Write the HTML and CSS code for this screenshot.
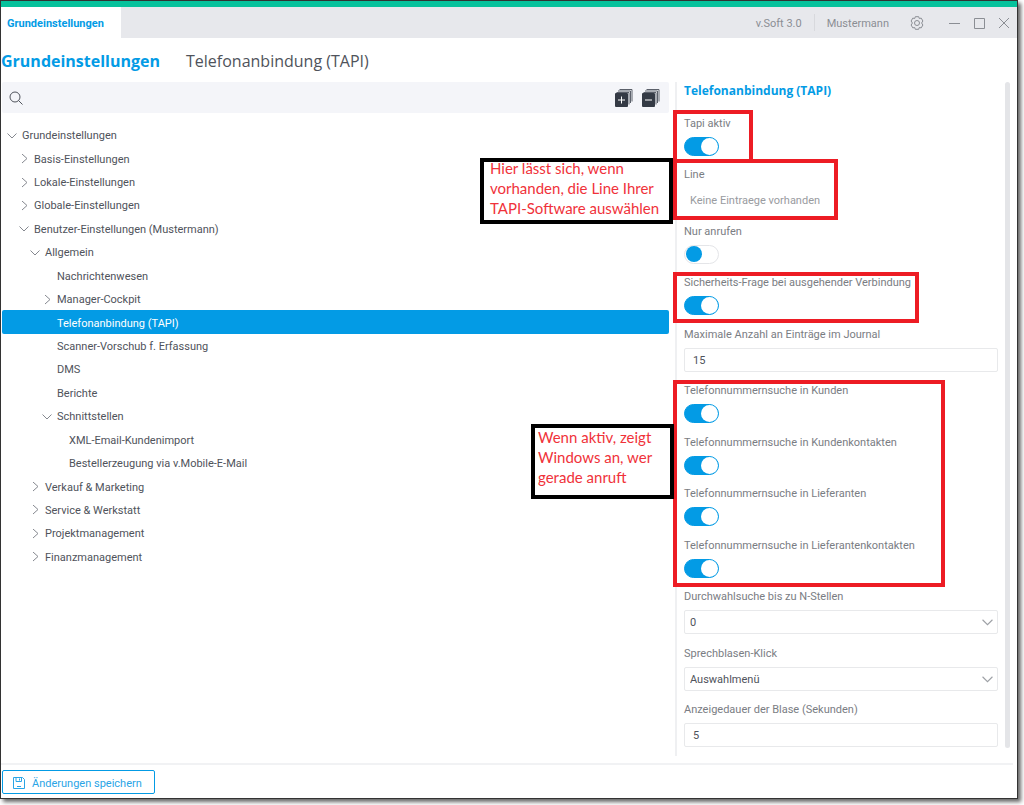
FILE: index.html
```
<!DOCTYPE html>
<html lang="de">
<head>
    <meta charset="UTF-8">
    <meta name="viewport" content="width=device-width, initial-scale=1.0">
    <title>Grundeinstellungen</title>
    <link rel="stylesheet" href="styles.css">
</head>
<body>
    <!-- shared icons -->
    <svg class="sprite" aria-hidden="true">
        <symbol id="down" viewBox="0 0 10 10"><path d="M.5 2.500 5 7l4.500-4.500"/></symbol>
        <symbol id="right" viewBox="0 0 10 10"><path d="M3 0l5 4.500L3 9"/></symbol>
    </svg>

    <div class="window">
        <header class="titlebar">
            <button class="tab">Grundeinstellungen</button>
            <div class="titlebar-right">
                <span class="version">v.Soft 3.0</span>
                <span class="user">Mustermann</span>
                <button class="icon-btn gear" aria-label="Einstellungen">
                    <svg width="14" height="14" viewBox="0 0 14 14"><path d="M5.300.700h3.400l.6 1.800 1.900-.4 1.700 2.900L11.600 7l1.300 2-1.700 2.900-1.900-.4-.6 1.800H5.300l-.6-1.800-1.900.4L1.100 9l1.300-2-1.300-2 1.700-2.900 1.900.4z"/><circle cx="7" cy="7" r="2.500"/></svg>
                </button>
                <button class="icon-btn" aria-label="Minimieren"><svg width="12" height="12" viewBox="0 0 12 12"><path d="M1 6.500h11"/></svg></button>
                <button class="icon-btn" aria-label="Maximieren"><svg width="12" height="12" viewBox="0 0 12 12"><path d="M1.500 1.500h10v10h-10z"/></svg></button>
                <button class="icon-btn" aria-label="Schließen"><svg width="12" height="12" viewBox="0 0 12 12"><path d="M1 1l10 10M11 1 1 11"/></svg></button>
            </div>
        </header>

        <div class="heading">
            <h1>Grundeinstellungen</h1>
            <span class="subtitle">Telefonanbindung (TAPI)</span>
        </div>

        <main class="content">
            <section class="left">
                <div class="search">
                    <label for="search"><svg width="14" height="14" viewBox="0 0 14 14"><circle cx="6" cy="6" r="5"/><path d="m9.500 9.500 4 4"/></svg></label>
                    <input type="text" id="search" aria-label="Suche">
                    <button class="stack-btn" aria-label="Alle aufklappen">
                        <svg width="18" height="18" viewBox="0 0 18 18"><path class="sheets" d="M1.500 3.500h12.500v12M3 2h12.500v12M4.500.500H17v12"/><rect y="4" width="13" height="14" rx="1"/><path class="sign" d="M3 11h7M6.500 7.500v7"/></svg>
                    </button>
                    <button class="stack-btn" aria-label="Alle zuklappen">
                        <svg width="18" height="18" viewBox="0 0 18 18"><path class="sheets" d="M1.500 3.500h12.500v12M3 2h12.500v12M4.500.500H17v12"/><rect y="4" width="13" height="14" rx="1"/><path class="sign" d="M3 11h7"/></svg>
                    </button>
                </div>

                <ul class="tree">
                    <li class="l0"><svg><use href="#down"/></svg>Grundeinstellungen</li>
                    <li class="l1"><svg><use href="#right"/></svg>Basis-Einstellungen</li>
                    <li class="l1"><svg><use href="#right"/></svg>Lokale-Einstellungen</li>
                    <li class="l1"><svg><use href="#right"/></svg>Globale-Einstellungen</li>
                    <li class="l1"><svg><use href="#down"/></svg>Benutzer-Einstellungen (Mustermann)</li>
                    <li class="l2"><svg><use href="#down"/></svg>Allgemein</li>
                    <li class="l3"><svg></svg>Nachrichtenwesen</li>
                    <li class="l3"><svg><use href="#right"/></svg>Manager-Cockpit</li>
                    <li class="l3 selected"><svg></svg>Telefonanbindung (TAPI)</li>
                    <li class="l3"><svg></svg>Scanner-Vorschub f. Erfassung</li>
                    <li class="l3"><svg></svg>DMS</li>
                    <li class="l3"><svg></svg>Berichte</li>
                    <li class="l3"><svg><use href="#down"/></svg>Schnittstellen</li>
                    <li class="l4"><svg></svg>XML-Email-Kundenimport</li>
                    <li class="l4"><svg></svg>Bestellerzeugung via v.Mobile-E-Mail</li>
                    <li class="l2"><svg><use href="#right"/></svg>Verkauf &amp; Marketing</li>
                    <li class="l2"><svg><use href="#right"/></svg>Service &amp; Werkstatt</li>
                    <li class="l2"><svg><use href="#right"/></svg>Projektmanagement</li>
                    <li class="l2"><svg><use href="#right"/></svg>Finanzmanagement</li>
                </ul>
            </section>

            <section class="right">
                <h2>Telefonanbindung (TAPI)</h2>
                <form class="form">
                    <div class="field">
                        <label for="tapi">Tapi aktiv</label>
                        <input type="checkbox" class="switch" id="tapi" checked>
                    </div>
                    <div class="field">
                        <label for="line">Line</label>
                        <select id="line" class="empty" disabled><option>Keine Eintraege vorhanden</option></select>
                    </div>
                    <div class="field">
                        <label for="callonly">Nur anrufen</label>
                        <input type="checkbox" class="switch" id="callonly">
                    </div>
                    <div class="field">
                        <label for="confirm">Sicherheits-Frage bei ausgehender Verbindung</label>
                        <input type="checkbox" class="switch" id="confirm" checked>
                    </div>
                    <div class="field">
                        <label for="journal">Maximale Anzahl an Einträge im Journal</label>
                        <input type="text" id="journal" value="15">
                    </div>
                    <div class="field">
                        <label for="kunden">Telefonnummernsuche in Kunden</label>
                        <input type="checkbox" class="switch" id="kunden" checked>
                    </div>
                    <div class="field">
                        <label for="kundenkontakte">Telefonnummernsuche in Kundenkontakten</label>
                        <input type="checkbox" class="switch" id="kundenkontakte" checked>
                    </div>
                    <div class="field">
                        <label for="lieferanten">Telefonnummernsuche in Lieferanten</label>
                        <input type="checkbox" class="switch" id="lieferanten" checked>
                    </div>
                    <div class="field">
                        <label for="lieferantenkontakte">Telefonnummernsuche in Lieferantenkontakten</label>
                        <input type="checkbox" class="switch" id="lieferantenkontakte" checked>
                    </div>
                    <div class="field">
                        <label for="stellen">Durchwahlsuche bis zu N-Stellen</label>
                        <div class="select">
                            <select id="stellen"><option>0</option></select>
                            <svg><use href="#down"/></svg>
                        </div>
                    </div>
                    <div class="field">
                        <label for="klick">Sprechblasen-Klick</label>
                        <div class="select">
                            <select id="klick"><option>Auswahlmenü</option></select>
                            <svg><use href="#down"/></svg>
                        </div>
                    </div>
                    <div class="field">
                        <label for="dauer">Anzeigedauer der Blase (Sekunden)</label>
                        <input type="text" id="dauer" value="5">
                    </div>
                </form>
                <div class="scrollbar"></div>

                <div class="mark mark-tapi"></div>
                <div class="mark mark-line"></div>
                <div class="mark mark-confirm"></div>
                <div class="mark mark-search"></div>
                <p class="note note-line">Hier lässt sich, wenn vorhanden, die Line Ihrer TAPI-Software auswählen</p>
                <p class="note note-search">Wenn aktiv, zeigt Windows an, wer gerade anruft</p>
            </section>
        </main>

        <footer class="footer">
            <button class="save">
                <svg width="12" height="12" viewBox="0 0 12 12"><path d="M.5.500h9l2 2v9H.500zM3 .500v4h5.500v-4M6.500 1.500v2M4 9.500h4"/></svg>
                Änderungen speichern
            </button>
        </footer>
    </div>
</body>
</html>
```

FILE: styles.css
```
* {
    box-sizing: border-box;
}

body {
    margin: 0;
    padding: 0 6px 6px 0;
    height: 100vh;
    background-color: #fff;
    font-family: Roboto, "Noto Sans", sans-serif;
    font-size: 11px;
    color: #4f535b;
}

button, input, select {
    font: inherit;
    color: inherit;
}

button {
    background: none;
    border: none;
    padding: 0;
}

svg {
    fill: none;
    stroke: currentColor;
    flex: none;
}

.sprite {
    display: none;
}

.window {
    display: flex;
    flex-direction: column;
    height: 100%;
    border: 1px solid #333;
    background-color: #fff;
    box-shadow: 3px 3px 4px rgba(0, 0, 0, 0.6);
}

/* title bar */
.titlebar {
    display: flex;
    justify-content: space-between;
    height: 37px;
    border-top: 6px solid #06c29c;
    background-color: #e7e8ec;
    flex: none;
}

.tab {
    width: 120px;
    padding: 2px 0 0 6px;
    text-align: left;
    background-color: #fff;
    color: #039be5;
    font-weight: bold;
}

.titlebar-right {
    display: flex;
    align-items: center;
    padding-right: 7px;
    color: #8b8e94;
}

.version {
    padding: 2px 12px 0 0;
}

.user {
    padding: 3px 21px 1px 12px;
    border-left: 1px solid #d8d9dd;
}

.icon-btn {
    display: flex;
    margin-left: 13px;
}

.gear {
    margin: 0 11px 0 0;
}

/* heading */
.heading {
    display: flex;
    align-items: center;
    gap: 26px;
    height: 44px;
    padding-top: 2px;
    flex: none;
    font-family: "Open Sans", "Noto Sans", sans-serif;
    font-size: 16px;
}

h1 {
    margin: 0;
    font-size: 16px;
    color: #039be5;
}

/* content */
.content {
    display: flex;
    flex: 1;
    min-height: 0;
    padding-bottom: 7px;
}

.left {
    flex: 1;
    padding: 0 6px 0 1px;
}

.search {
    display: flex;
    align-items: center;
    height: 31px;
    padding: 0 9px 0 7px;
    border-radius: 2px;
    background-color: #f4f5f9;
}

.search label {
    display: flex;
}

.search input {
    flex: 1;
    border: none;
    background: none;
    outline: none;
}

.stack-btn {
    display: flex;
    margin-left: 9px;
    color: #343a45;
}

.stack-btn rect {
    fill: #343a45;
    stroke: none;
}

.stack-btn .sheets {
    stroke: #5b606a;
}

.stack-btn .sign {
    stroke: #fff;
}

.tree {
    display: grid;
    grid-auto-rows: 1fr;
    height: 445px;
    margin: 10px 0 0;
    padding: 0;
    list-style: none;
}

.tree li {
    display: flex;
    align-items: center;
    gap: 5px;
    padding-top: 2px;
    border-radius: 2px;
}

.tree svg {
    width: 10px;
    height: 10px;
    color: #85888f;
}

.l0 { padding-left: 5px; }
.l1 { padding-left: 17px; }
.l2 { padding-left: 28px; }
.l3 { padding-left: 40px; }
.l4 { padding-left: 52px; }

.selected {
    background-color: #039be5;
    color: #fff;
}

/* settings form */
.right {
    position: relative;
    display: flex;
    flex-direction: column;
    flex: 0 0 342px;
    padding: 0 19px 9px 7px;
    border-left: 2px solid #eff0f2;
}

h2 {
    margin: 0;
    font-family: "Open Sans", "Noto Sans", sans-serif;
    font-size: 12px;
    line-height: 18px;
    color: #039be5;
}

.form {
    display: flex;
    flex-direction: column;
    justify-content: space-between;
    flex: 1;
    margin-top: 15px;
}

.field {
    display: flex;
    flex-direction: column;
    gap: 4px;
}

.field label {
    line-height: 18px;
    color: #7a7d83;
}

.field input[type="text"], .field select {
    width: 100%;
    height: 24px;
    padding: 1px 8px 0;
    border: 1px solid #e8e9eb;
    border-radius: 2px;
    background-color: #fff;
    appearance: none;
}

.field select {
    padding: 1px 5px 0;
}

.field select.empty {
    border-color: transparent;
    color: #999ba0;
    opacity: 1;
}

.select {
    position: relative;
}

.select svg {
    position: absolute;
    top: 7px;
    right: 5px;
    width: 11px;
    height: 11px;
    color: #9da0a5;
    pointer-events: none;
}

.switch {
    appearance: none;
    display: flex;
    justify-content: flex-start;
    align-items: center;
    width: 35px;
    height: 19px;
    margin: 0;
    padding: 0 1px;
    border: 1px solid #e4e5e8;
    border-radius: 10px;
    background-color: #fff;
}

.switch::before {
    content: "";
    width: 16px;
    height: 16px;
    border-radius: 50%;
    background-color: #039be5;
}

.switch:checked {
    justify-content: flex-end;
    padding: 0;
    border-color: #039be5;
    background-color: #039be5;
}

.switch:checked::before {
    width: 17px;
    height: 17px;
    background-color: #fff;
}

.scrollbar {
    position: absolute;
    top: 0;
    right: 7px;
    bottom: 8px;
    width: 5px;
    border-radius: 3px;
    background-color: #e4e5e8;
}

/* annotations over the form */
.mark {
    position: absolute;
    left: -4px;
    border: 4px solid #ed1c24;
}

.mark-tapi {
    top: 28px;
    width: 80px;
    height: 53px;
}

.mark-line {
    top: 77px;
    width: 165px;
    height: 61px;
}

.mark-confirm {
    top: 190px;
    width: 246px;
    height: 51px;
}

.mark-search {
    top: 298px;
    width: 272px;
    height: 207px;
}

.note {
    position: absolute;
    margin: 0;
    background-color: #fff;
    box-shadow: inset 0 0 0 4px #000;
    color: #f0323a;
    font-family: Lato, sans-serif;
    font-size: 15px;
    line-height: 20px;
}

.note-line {
    top: 76px;
    right: calc(100% + 4px);
    width: 193px;
    height: 66px;
    padding: 0 10px;
}

.note-search {
    top: 342px;
    right: calc(100% + 3px);
    width: 143px;
    height: 75px;
    padding: 3px 7px;
}

/* footer */
.footer {
    flex: none;
    margin-right: 4px;
    padding: 5px 1px 4px;
    border-top: 2px solid #f1f2f4;
}

.save {
    display: flex;
    align-items: center;
    gap: 7px;
    height: 24px;
    padding: 2px 12px 0 10px;
    border: 1px solid #039be5;
    border-radius: 2px;
    color: #2aa5e6;
}
```
